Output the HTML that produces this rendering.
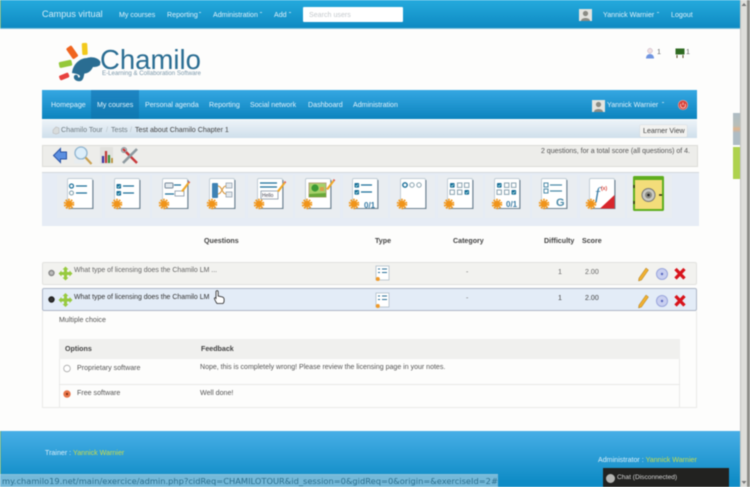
<!DOCTYPE html>
<html lang="en"><head><meta charset="utf-8"><title>Chamilo</title>
<style>
html,body{margin:0;padding:0;width:750px;height:487px;overflow:hidden;background:#fdfdfc}
body{font-family:"Liberation Sans",Arial,sans-serif;font-size:7.1px;color:#444;position:relative}
#w{position:absolute;left:0;top:0;width:750px;height:487px;overflow:hidden;filter:blur(.45px)}
.a,.t{position:absolute;white-space:nowrap}
.a{display:block}
.t{line-height:10px}
.l{color:#dff1fa}
.c{position:absolute;width:2px;height:1px;background:#a5d5ea}
svg{position:absolute;overflow:visible}
.cell{position:absolute;top:175px;width:45px;height:43px;background:#e9edf1}
</style></head><body><div id="w">

<svg width="0" height="0" style="position:absolute">
<defs>
<g id="card"><rect x="0.5" y="0.5" width="25" height="30" rx="1.5" fill="#fff" stroke="#c2ced6"/><path d="M26 2v28.500H2" fill="none" stroke="#6d8290" stroke-width="1"/></g>
<g id="star"><circle cx="5" cy="5" r="3.400" fill="#f0941a"/><circle cx="5" cy="5" r="4.300" fill="none" stroke="#f29a20" stroke-width="2" stroke-dasharray="1.700 1.050"/></g>
<g id="cb"><rect width="4.6" height="4.6" rx=".8" fill="#1c6f99"/><path d="M1 2.4l1 1 1.7-2" stroke="#cfe" stroke-width=".6" fill="none"/></g>
<g id="pen"><path d="M0 9L7 0l1.5 1.2L2 10z" fill="#f0a828"/><path d="M7 0l.8-1 1.5 1.2-.8 1z" fill="#e05050"/></g>
</defs>
</svg>

<!-- top bar -->
<div class="a" style="left:0;top:0;width:740px;height:28px;background:linear-gradient(#25aadd,#0e8ac2);border-bottom:1px solid #7cc2de"></div>
<div class="a" style="left:0;top:0;width:1px;height:28px;background:#5aa878"></div>
<div class="t" style="left:42px;top:9px;font-size:9.1px;color:#d5edf8">Campus virtual</div>
<div class="t l" style="left:119px;top:10px">My courses</div>
<div class="t l" style="left:167px;top:10px">Reporting</div><div class="c" style="left:199px;top:12px"></div>
<div class="t l" style="left:213px;top:10px">Administration</div><div class="c" style="left:260px;top:12px"></div>
<div class="t l" style="left:274px;top:10px">Add</div><div class="c" style="left:289px;top:12px"></div>
<div class="a" style="left:303px;top:7px;width:100px;height:15px;background:#fff;border-radius:1px"></div>
<div class="t" style="left:309px;top:10px;color:#c4c9cc">Search users</div>
<div class="a" style="left:579px;top:9px;width:13px;height:12px;background:#e4e4df"></div>
<svg style="left:579px;top:9px" width="13" height="12"><circle cx="6.5" cy="4.5" r="2.6" fill="#8b8b83"/><path d="M2 12c0-4 9-4 9 0z" fill="#8b8b83"/></svg>
<div class="t l" style="left:603px;top:10px">Yannick Warnier</div><div class="c" style="left:657px;top:12px"></div>
<div class="t l" style="left:671px;top:10px">Logout</div>

<!-- logo -->
<svg style="left:56px;top:40px" width="50" height="44">
<rect x="26" y="3" width="5.500" height="12" rx="1.500" fill="#f2c91d" transform="rotate(-3 28 9)"/>
<rect x="13" y="6" width="6.500" height="13" rx="1.500" fill="#f0641e" transform="rotate(-35 16 12.500)"/>
<rect x="3" y="21" width="13" height="6" rx="1.500" fill="#95c83a" transform="rotate(-12 9 24)"/>
<rect x="3" y="34" width="10" height="5" rx="1.500" fill="#e8413e" transform="rotate(-22 8 36)"/>
<path d="M16 33C17 24 24 18 31 18C35 16.500 42 17 44.500 22L44 25C42 27 38.500 27 37 27C35 31 32 33.500 28.500 33.500C27.500 36 28 39 25 41C21 42 17 39.500 18 36C19 34 22 34.500 22 36.500C22 38 23.500 38 24 36.500C24 35 22 34 16 33z" fill="#2a6d92"/>
</svg>
<div class="t" style="left:100px;top:46px;font-size:27.5px;line-height:28px;color:#2a6d92">Chamilo</div>
<div class="t" style="left:102px;top:70px;font-size:6.1px;line-height:8px;color:#7b98ab">E-Learning &amp; Collaboration Software</div>

<!-- small top right icons -->
<svg style="left:646px;top:48px" width="9" height="11"><circle cx="4" cy="2.800" r="2.400" fill="#f0e0e0" stroke="#b8a0b8" stroke-width=".5"/><path d="M0 10.500c0-6 8-6 8 0z" fill="#6f94e0"/></svg>
<div class="t" style="left:657px;top:47px;color:#666">1</div>
<svg style="left:675px;top:48px" width="11" height="11"><rect x=".5" y=".5" width="9" height="6" fill="#2f6b22"/><path d="M2 7v3M8 7v3" stroke="#5a4a20"/></svg>
<div class="t" style="left:686px;top:47px;color:#666">1</div>

<!-- main nav -->
<div class="a" style="left:42px;top:90px;width:655px;height:29px;background:linear-gradient(#35a7e2,#0c84be)"></div>
<div class="a" style="left:91px;top:90px;width:48px;height:29px;background:linear-gradient(#1f86c4,#0e78b0)"></div>
<div class="t l" style="left:51px;top:100px">Homepage</div>
<div class="t l" style="left:97px;top:100px">My courses</div>
<div class="t l" style="left:145px;top:100px">Personal agenda</div>
<div class="t l" style="left:209px;top:100px">Reporting</div>
<div class="t l" style="left:250px;top:100px">Social network</div>
<div class="t l" style="left:308px;top:100px">Dashboard</div>
<div class="t l" style="left:353px;top:100px">Administration</div>
<div class="a" style="left:592px;top:100px;width:13px;height:12px;background:#e4e4df"></div>
<svg style="left:592px;top:100px" width="13" height="12"><circle cx="6.5" cy="4.5" r="2.6" fill="#8b8b83"/><path d="M2 12c0-4 9-4 9 0z" fill="#8b8b83"/></svg>
<div class="t l" style="left:607px;top:100px">Yannick Warnier</div><div class="c" style="left:662px;top:102px"></div>
<svg style="left:678px;top:100px" width="10" height="10"><circle cx="5" cy="5" r="4.7" fill="#d9423a" stroke="#e9a7a0" stroke-width=".7"/><path d="M3 4a2.5 2.5 0 1 0 4 0M5 2.5v2.5" stroke="#fbdcd6" stroke-width=".8" fill="none"/></svg>

<!-- breadcrumb -->
<div class="a" style="left:42px;top:120px;width:655px;height:18px;background:linear-gradient(#edf3f8,#cfdfeb)"></div>
<svg style="left:52px;top:126px" width="8" height="9"><path d="M1 4l3-3 3 1v5l-3 1-3-1z" fill="#d8dcdc" stroke="#bbb" stroke-width=".6"/></svg>
<div class="t" style="left:61px;top:125px;color:#6e7a80">Chamilo Tour</div>
<div class="t" style="left:106px;top:125px;color:#b8c2c8">/</div>
<div class="t" style="left:111px;top:125px;color:#6e7a80">Tests</div>
<div class="t" style="left:130px;top:125px;color:#b8c2c8">/</div>
<div class="t" style="left:135px;top:125px;color:#444">Test about Chamilo Chapter 1</div>
<div class="a" style="left:640px;top:125px;width:47px;height:12px;background:#f2f2f0;border-radius:1px;box-shadow:0 0 1px #bbb"></div>
<div class="t" style="left:643px;top:126px;color:#444">Learner View</div>

<!-- toolbar -->
<div class="a" style="left:42px;top:145px;width:654px;height:20px;background:#ededea;border:1px solid #dcdcd8"></div>
<svg style="left:52px;top:147px" width="90" height="19">
<path d="M1.500 8.500l7-7v3.500h6v7h-6v3.500z" fill="#5b8fe0" stroke="#2b54a5"/>
<circle cx="29" cy="6" r="6" fill="#dceefa" stroke="#8fb4cf" stroke-width="1.300"/><rect x="22" y="12.500" width="10" height="4" fill="#e8edf0"/><path d="M33.500 10.500l6 6.500" stroke="#c9a050" stroke-width="2.200"/>
<rect x="48" y="0" width="13" height="17" fill="#e2e2de"/><path d="M51 16V9" stroke="#3e37a0" stroke-width="2.200"/><path d="M54 16V4" stroke="#c03a3a" stroke-width="2.200"/><path d="M57 16V8" stroke="#3f8f3a" stroke-width="2.200"/><path d="M60 16v-5" stroke="#b58a2a" stroke-width="1.600"/>
<path d="M71 2l14 14" stroke="#c8383a" stroke-width="2.400"/><path d="M85 2L71 16" stroke="#8e9aa0" stroke-width="2.600"/><circle cx="72" cy="3" r="2.400" fill="none" stroke="#8e9aa0" stroke-width="1.300"/>
</svg>
<div class="t" style="right:60px;top:147px;color:#555;font-size:7px">2 questions, for a total score (all questions) of 4.</div>

<!-- question types panel -->
<div class="a" style="left:42px;top:172px;width:657px;height:54px;background:#e6ecf5;border-top:1px solid #d3d8dc;box-sizing:border-box"></div>
<div class="cell" style="left:57px"></div><div class="cell" style="left:105px"></div><div class="cell" style="left:152px"></div><div class="cell" style="left:200px"></div><div class="cell" style="left:248px"></div><div class="cell" style="left:295px"></div><div class="cell" style="left:343px"></div><div class="cell" style="left:390px"></div><div class="cell" style="left:438px"></div><div class="cell" style="left:485px"></div><div class="cell" style="left:532px"></div><div class="cell" style="left:580px"></div><div class="cell" style="left:627px"></div>

<svg style="left:0;top:0" width="750" height="240">
<!-- 1 -->
<g transform="translate(67,178)"><use href="#card"/><circle cx="4.5" cy="8" r="2" fill="none" stroke="#1c6f99" stroke-width="1.2"/><circle cx="4.5" cy="15" r="2" fill="none" stroke="#7a9aa8"/><path d="M9 8h11M9 15h11" stroke="#1c6f99" stroke-width="1.3"/></g>
<g transform="translate(64,199)"><use href="#star"/></g>
<!-- 2 -->
<g transform="translate(114,178)"><use href="#card"/><use href="#cb" x="2.5" y="6"/><use href="#cb" x="2.5" y="13"/><path d="M9 8h11M9 15h11" stroke="#1c6f99" stroke-width="1.3"/></g>
<g transform="translate(112,199)"><use href="#star"/></g>
<!-- 3 -->
<g transform="translate(162,178)"><use href="#card"/><rect x="3" y="5" width="8" height="5" rx="1" fill="#e3e9ee" stroke="#789"/><path d="M12 7h7M3 16h9" stroke="#1c6f99" stroke-width="1.2"/><rect x="13" y="13" width="9" height="5" fill="#fff" stroke="#789" stroke-width=".7"/><use href="#pen" x="19" y="4"/></g>
<g transform="translate(159,199)"><use href="#star"/></g>
<!-- 4 -->
<g transform="translate(209,178)"><use href="#card"/><rect x="3" y="5" width="6" height="15" rx="1" fill="#3e82b4"/><rect x="17" y="5" width="6" height="5" fill="#e3e9ee" stroke="#789" stroke-width=".6"/><rect x="17" y="14" width="6" height="5" fill="#e3e9ee" stroke="#789" stroke-width=".6"/><path d="M9 8C13 8 13 16 17 16M9 16C13 16 13 8 17 8" stroke="#d8963a" fill="none"/></g>
<g transform="translate(207,199)"><use href="#star"/></g>
<!-- 5 -->
<g transform="translate(257,178)"><use href="#card"/><path d="M3 5h17M3 9h17" stroke="#1c6f99" stroke-width="1.2"/><rect x="4" y="13" width="17" height="8" fill="#fff" stroke="#789" stroke-width=".7"/><text x="5" y="19" font-size="5" fill="#445" font-family="Liberation Sans">Hello</text><use href="#pen" x="20" y="4"/></g>
<g transform="translate(254,199)"><use href="#star"/></g>
<!-- 6 -->
<g transform="translate(305,178)"><use href="#card"/><rect x="4" y="5" width="17" height="14" fill="#a5d16a" stroke="#b7a27a"/><circle cx="10" cy="10" r="3.6" fill="#3d9a35"/><rect x="15" y="9" width="4" height="4" fill="#d9a34c"/><path d="M4 16l17-1v4H4z" fill="#6aa83a"/><use href="#pen" x="21" y="2"/></g>
<g transform="translate(302,199)"><use href="#star"/></g>
<!-- 7 -->
<g transform="translate(352,178)"><use href="#card"/><use href="#cb" x="2.5" y="5"/><use href="#cb" x="2.5" y="12"/><path d="M9 7h11M9 14h11" stroke="#1c6f99" stroke-width="1.3"/></g>
<text x="364" y="208" font-size="8" font-weight="bold" fill="#3a7ca5" font-family="Liberation Sans">0/1</text>
<g transform="translate(349,199)"><use href="#star"/></g>
<!-- 8 -->
<g transform="translate(400,178)"><use href="#card"/><circle cx="5" cy="7" r="2.2" fill="none" stroke="#1c6f99" stroke-width="1.4"/><circle cx="12" cy="7" r="2.2" fill="none" stroke="#8aa3b0"/><circle cx="19" cy="7" r="2.2" fill="none" stroke="#8aa3b0"/></g>
<g transform="translate(397,199)"><use href="#star"/></g>
<!-- 9 -->
<g transform="translate(447,178)"><use href="#card"/><use href="#cb" x="3" y="5"/><rect x="10.5" y="5" width="4.4" height="4.4" fill="none" stroke="#8aa3b0"/><rect x="17.5" y="5" width="4.4" height="4.4" fill="none" stroke="#8aa3b0"/><rect x="3" y="12" width="4.4" height="4.4" fill="none" stroke="#8aa3b0"/><rect x="10.5" y="12" width="4.4" height="4.4" fill="none" stroke="#8aa3b0"/><use href="#cb" x="17.5" y="12"/></g>
<g transform="translate(444,199)"><use href="#star"/></g>
<!-- 10 -->
<g transform="translate(494,178)"><use href="#card"/><use href="#cb" x="3" y="5"/><rect x="10.5" y="5" width="4.4" height="4.4" fill="none" stroke="#8aa3b0"/><rect x="17.5" y="5" width="4.4" height="4.4" fill="none" stroke="#8aa3b0"/><rect x="3" y="12" width="4.4" height="4.4" fill="none" stroke="#8aa3b0"/><rect x="10.5" y="12" width="4.4" height="4.4" fill="none" stroke="#8aa3b0"/><use href="#cb" x="17.5" y="12"/></g>
<text x="506" y="207" font-size="8" font-weight="bold" fill="#3a7ca5" font-family="Liberation Sans">0/1</text>
<g transform="translate(492,199)"><use href="#star"/></g>
<!-- 11 -->
<g transform="translate(541,178)"><use href="#card"/><rect x="3" y="5" width="4" height="4" fill="#fff" stroke="#4c8aa8"/><rect x="3" y="11" width="4" height="4" fill="#fff" stroke="#4c8aa8"/><path d="M9 7h12M9 13h12" stroke="#4c8aa8" stroke-width="1.2"/></g>
<text x="556" y="206" font-size="11" font-weight="bold" fill="#4c8aa8" font-family="Liberation Sans">G</text>
<g transform="translate(539,199)"><use href="#star"/></g>
<!-- 12 -->
<g transform="translate(589,178)"><use href="#card"/><path d="M25.500 17v13.500H11z" fill="#d8262c"/></g>
<text x="595" y="199" font-size="17" font-style="italic" font-family="Liberation Serif" fill="#3a7ca5">f</text>
<text x="601" y="190" font-size="5" font-weight="bold" fill="#d8433a" font-family="Liberation Sans">(x)</text>
<g transform="translate(586,199)"><use href="#star"/></g>
<!-- safe -->
<rect x="633" y="176" width="31" height="35" rx="1.500" fill="#5fae1e"/>
<rect x="635" y="180" width="27" height="29" fill="#f3dd7a"/>
<circle cx="648.500" cy="195" r="6.500" fill="#c9c9c2" stroke="#777"/><circle cx="648.500" cy="195" r="3.500" fill="#8b8b84"/><circle cx="648.500" cy="195" r="1.300" fill="#222"/>
<path d="M634 185v3M634 201v3M659 195h3" stroke="#2a2a10" stroke-width="1.400"/>
</svg>

<!-- table head -->
<div class="t" style="left:204px;top:236px;font-weight:bold;color:#444">Questions</div>
<div class="t" style="left:375px;top:236px;font-weight:bold;color:#444">Type</div>
<div class="t" style="left:453px;top:236px;font-weight:bold;color:#444">Category</div>
<div class="t" style="left:544px;top:236px;font-weight:bold;color:#444">Difficulty</div>
<div class="t" style="left:582px;top:236px;font-weight:bold;color:#444">Score</div>

<!-- rows -->
<div class="a" style="left:42px;top:262px;width:655px;height:23px;background:#f2f2ef;border:1px solid #e2e2de;box-sizing:border-box;border-radius:2px"></div>
<div class="a" style="left:42px;top:288px;width:655px;height:23px;background:#e3ecf7;border:1px solid #aeb7c6;box-sizing:border-box;border-radius:2px"></div>

<svg style="left:0;top:255px" width="750" height="60">
<circle cx="51.500" cy="18" r="2.500" fill="#bbb" stroke="#888" stroke-width="1.400"/>
<circle cx="51.500" cy="44.500" r="2.500" fill="#333" stroke="#222" stroke-width="1.400"/>
<path d="M65.500 11.500l3 3h-1.500v2.500h2.500v-1.500l3 3-3 3v-1.500h-2.500v2.500h1.500l-3 3-3-3h1.500v-2.500H61.500v1.500l-3-3 3-3v1.500H64v-2.500h-1.500z" fill="#97ca3f"/>
<path d="M65.500 38l3 3h-1.500v2.500h2.500v-1.500l3 3-3 3v-1.500h-2.500v2.500h1.500l-3 3-3-3h1.500v-2.500H61.500v1.500l-3-3 3-3v1.500H64V41h-1.500z" fill="#97ca3f"/>
<path d="M216 47l-1.500-3c-.5-1.200 1-1.700 1.500-.8V37c0-1.800 2.200-1.800 2.200 0v4l4.300 1c1.800.5 2 2 1.500 5l-1 1.500h-6z" fill="#fff" stroke="#222" stroke-width=".8"/>
<g transform="translate(376,11)"><rect width="13" height="14" fill="#fff" stroke="#a8b8c4" stroke-width=".7"/><path d="M2 3h2M6 3h5M2 6.500h2M6 6.500h5" stroke="#2a6f96"/><circle cx="1.800" cy="13" r="2" fill="#ef9a2a"/></g>
<g transform="translate(376,38)"><rect width="13" height="14" fill="#fff" stroke="#a8b8c4" stroke-width=".7"/><path d="M2 3h2M6 3h5M2 6.500h2M6 6.500h5" stroke="#2a6f96"/><circle cx="1.800" cy="13" r="2" fill="#ef9a2a"/></g>
<path d="M639 23l7-10 2.500 2-7 10-3 1z" fill="#f0b030" stroke="#a87a20" stroke-width=".5"/>
<path d="M639 50l7-10 2.500 2-7 10-3 1z" fill="#f0b030" stroke="#a87a20" stroke-width=".5"/>
<circle cx="662" cy="19" r="5.500" fill="#c8cff0" stroke="#9aa6dc"/><circle cx="662" cy="19" r="1.200" fill="#5a68c0"/>
<circle cx="662" cy="46" r="5.500" fill="#c8cff0" stroke="#9aa6dc"/><circle cx="662" cy="46" r="1.200" fill="#5a68c0"/>
<path d="M675.500 14l9 9.500M684.500 14l-9 9.500" stroke="#d8141c" stroke-width="3.200"/>
<path d="M675.500 41l9 9.500M684.500 41l-9 9.500" stroke="#d8141c" stroke-width="3.200"/>
</svg>

<div class="t" style="left:74px;top:266px;color:#666;font-size:6.95px">What type of licensing does the Chamilo LM ...</div>
<div class="t" style="left:74px;top:293px;color:#333;font-size:6.95px">What type of licensing does the Chamilo LM</div>
<div class="t" style="left:466px;top:267px;color:#777">-</div><div class="t" style="left:466px;top:293px;color:#777">-</div>
<div class="t" style="left:558px;top:267px;color:#666">1</div><div class="t" style="left:558px;top:293px;color:#444">1</div>
<div class="t" style="left:585px;top:267px;color:#666">2.00</div><div class="t" style="left:585px;top:293px;color:#444">2.00</div>

<!-- expanded -->
<div class="a" style="left:42px;top:311px;width:655px;height:97px;background:#fdfdfc;border:1px solid #eaeae8;border-top:0;box-sizing:border-box"></div>
<div class="t" style="left:59px;top:315px;color:#555">Multiple choice</div>
<div class="a" style="left:59px;top:339px;width:621px;height:69px;border-left:1px solid #ebebe9;border-right:1px solid #ebebe9;box-sizing:border-box"></div>
<div class="a" style="left:59px;top:339px;width:621px;height:20px;background:#f0f0ee"></div>
<div class="a" style="left:59px;top:384px;width:621px;height:1px;background:#e8e8e6"></div>
<div class="t" style="left:65px;top:344px;font-weight:bold;color:#444">Options</div>
<div class="t" style="left:201px;top:344px;font-weight:bold;color:#444">Feedback</div>
<svg style="left:60px;top:362px" width="16" height="38"><circle cx="7" cy="6.500" r="3.300" fill="#fff" stroke="#aaa" stroke-width=".8"/><circle cx="7" cy="32" r="3.700" fill="#e8754a"/><circle cx="7" cy="32" r="1.100" fill="#7a2a10"/></svg>
<div class="t" style="left:77px;top:363px;color:#555">Proprietary software</div>
<div class="t" style="left:200px;top:363px;color:#555;font-size:7.03px">Nope, this is completely wrong! Please review the licensing page in your notes.</div>
<div class="t" style="left:77px;top:388px;color:#555">Free software</div>
<div class="t" style="left:200px;top:388px;color:#555">Well done!</div>

<!-- footer -->
<div class="a" style="left:0;top:431px;width:740px;height:56px;background:linear-gradient(#47aee6,#0f8cc6 90%)"></div>
<div class="a" style="left:0;top:431px;width:1px;height:43px;background:#5aa878"></div>
<div class="t" style="left:45px;top:448px;color:#d8eef8">Trainer : <span style="color:#c9dd4a">Yannick Warnier</span></div>
<div class="t" style="left:598px;top:455px;color:#d8eef8">Administrator : <span style="color:#c9dd4a">Yannick Warnier</span></div>

<!-- status bar -->
<div class="a" style="left:0;top:474px;width:498px;height:13px;background:#75b9d9;border-top:1px solid #88c3dc;box-sizing:border-box;overflow:hidden;white-space:nowrap;padding-left:2px;font:8.3px/12px 'DejaVu Sans',sans-serif;color:#2c6f8e">my.chamilo19.net/main/exercice/admin.php?cidReq=CHAMILOTOUR&amp;id_session=0&amp;gidReq=0&amp;origin=&amp;exerciseId=2#</div>

<!-- chat -->
<div class="a" style="left:603px;top:468px;width:126px;height:19px;background:#222220"></div>
<div class="a" style="left:606px;top:474px;width:9px;height:9px;border-radius:50%;background:#b5b5b2"></div>
<div class="t" style="left:617px;top:473px;color:#d4d4d4;font-size:6.6px">Chat (Disconnected)</div>

<!-- scrollbar -->
<div class="a" style="left:733px;top:113px;width:7px;height:32px;background:linear-gradient(#aebcc4,#b9bfb8 40%,#e0b48c 50%,#aebcc4 62%)"></div>
<div class="a" style="left:733px;top:147px;width:7px;height:32px;background:#aed24e"></div>
<div class="a" style="left:740px;top:0;width:7px;height:487px;background:#dededa;border-left:1px solid #c4c4c0;box-sizing:border-box"></div>
<svg style="left:741px;top:2px" width="6" height="6"><path d="M3 1l2.500 3h-5z" fill="#777"/></svg>
<svg style="left:741px;top:479px" width="6" height="6"><path d="M3 5l2.500-3h-5z" fill="#777"/></svg>
<div class="a" style="left:747px;top:0;width:3px;height:487px;background:#8d8d88"></div>
</div></body></html>
